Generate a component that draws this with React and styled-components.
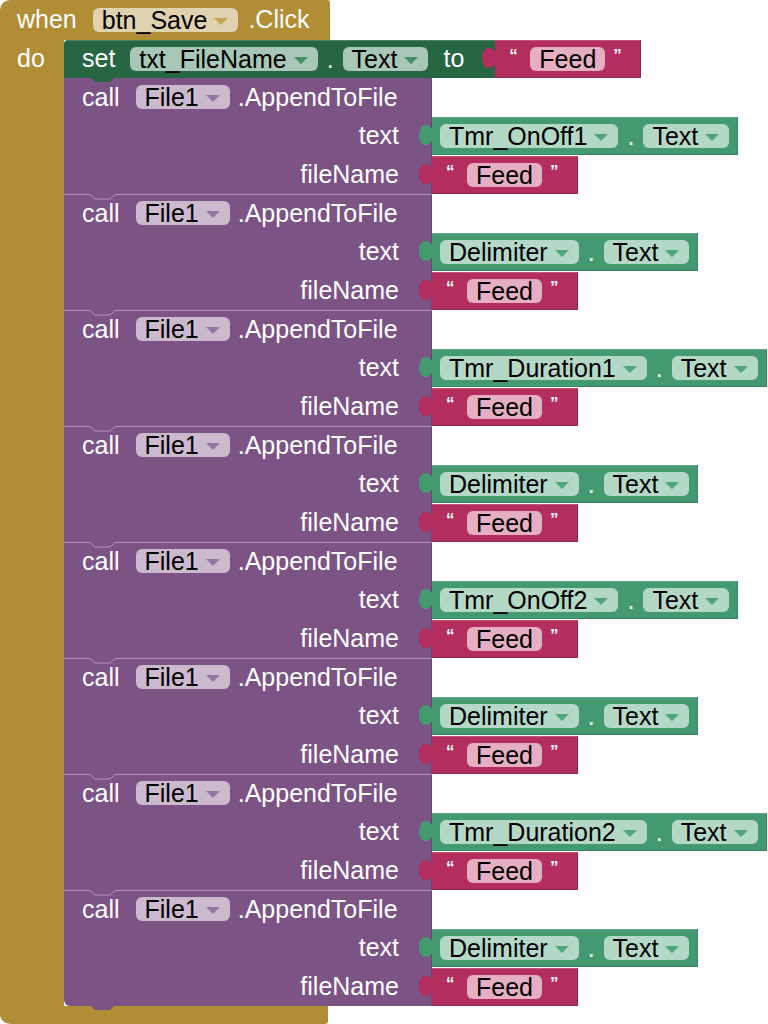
import styled, { createGlobalStyle } from 'styled-components';

const colors = {
  control: '#B18E35',
  method: '#7C5385',
  setter: '#266643',
  getter: '#439970',
  text: '#B32D5E',
};

const fields = {
  control: { bg: '#E0D2AE', arrow: '#C4A552' },
  method: { bg: '#CBBACE', arrow: '#9576A0' },
  setter: { bg: '#A8C7B6', arrow: '#3F8E64' },
  getter: { bg: '#B4D8C6', arrow: '#4FA67C' },
  text: { bg: '#E6AEC2' },
};

const appends = [
  'Tmr_OnOff1',
  'Delimiter',
  'Tmr_Duration1',
  'Delimiter',
  'Tmr_OnOff2',
  'Delimiter',
  'Tmr_Duration2',
  'Delimiter',
];

const GlobalStyle = createGlobalStyle`
  html, body {
    margin: 0;
    padding: 0;
    background: #ffffff;
  }
  body {
    font-family: "Liberation Sans", Arial, sans-serif;
    font-size: 25px;
    overflow: hidden;
  }
`;

const Workspace = styled.div`
  width: 768px;
  height: 1024px;
  overflow: hidden;
`;

const EventBlock = styled.div`
  display: flex;
  flex-direction: column;
  align-items: flex-start;
`;

const EventHeader = styled.div`
  width: 330px;
  height: 40px;
  box-sizing: border-box;
  padding: 0 0 1px 17px;
  display: flex;
  align-items: center;
  background: ${colors.control};
  border-top-left-radius: 10px;
  border-top-right-radius: 3px;
`;

const EventBody = styled.div`
  display: flex;
  align-items: stretch;
`;

const Arm = styled.div`
  width: 64px;
  flex-shrink: 0;
  box-sizing: border-box;
  padding: 4px 0 0 17px;
  background: ${colors.control};
`;

const EventFooter = styled.div`
  width: 328px;
  height: 18px;
  background: ${colors.control};
  border-bottom-left-radius: 10px;
  border-bottom-right-radius: 3px;
`;

const Stack = styled.div`
  display: flex;
  flex-direction: column;
`;

const Label = styled.span`
  color: #ffffff;
  line-height: 25px;
  white-space: nowrap;
  margin-left: ${(p) => p.$ml || 0}px;
`;

const Dot = styled.span`
  color: #ffffff;
  line-height: 24px;
  margin: 0 9px;
`;

const Chip = styled.span`
  display: inline-flex;
  align-items: center;
  height: 24px;
  box-sizing: border-box;
  padding: ${(p) => (p.$plain ? '0 9px' : '0 10px 0 9px')};
  margin-left: ${(p) => p.$ml || 0}px;
  gap: 7px;
  border-radius: 6px;
  background: ${(p) => p.$bg};
  color: #000000;
  line-height: 24px;
  white-space: nowrap;
`;

const Arrow = styled.span`
  width: 0;
  height: 0;
  margin-top: 3px;
  border-left: 7px solid transparent;
  border-right: 7px solid transparent;
  border-top: 7px solid ${(p) => p.$color};
`;

const SetRow = styled.div`
  display: flex;
  align-items: flex-start;
`;

const SetBlock = styled.div`
  position: relative;
  height: 38px;
  box-sizing: border-box;
  padding: 0 31px 1px 18px;
  display: flex;
  align-items: center;
  background: ${colors.setter};
  border-top-left-radius: 4px;
  box-shadow: inset 0 1px 0 rgba(255, 255, 255, 0.18);
`;

const CallBlock = styled.div`
  display: flex;
  align-items: flex-start;
`;

const MethodBody = styled.div`
  position: relative;
  width: 368px;
  flex-shrink: 0;
  box-sizing: border-box;
  display: flex;
  flex-direction: column;
  background: ${colors.method};
  border-bottom-left-radius: ${(p) => (p.$last ? 6 : 0)}px;
  box-shadow: inset -1px 0 0 rgba(0, 0, 0, 0.12);
`;

const MethodHead = styled.div`
  height: 39px;
  box-sizing: border-box;
  padding: 0 0 1px 18px;
  display: flex;
  align-items: center;
`;

const ArgLabel = styled.div`
  height: ${(p) => p.$h}px;
  box-sizing: border-box;
  padding: 0 33px 1px 0;
  display: flex;
  align-items: center;
  justify-content: flex-end;
  color: #ffffff;
  margin-top: ${(p) => p.$mt || 0}px;
`;

const Sockets = styled.div`
  padding-top: 39px;
  display: flex;
  flex-direction: column;
  align-items: flex-start;
`;

const GetterBlock = styled.div`
  position: relative;
  height: 38px;
  box-sizing: border-box;
  padding: 0 9px 0 8px;
  display: flex;
  align-items: center;
  background: ${colors.getter};
  box-shadow: inset -1px -1px 0 rgba(0, 0, 0, 0.14), inset 0 1px 0 rgba(255, 255, 255, 0.18);
`;

const TextBlock = styled.div`
  position: relative;
  height: 38px;
  box-sizing: border-box;
  padding: 0 20px 0 14px;
  margin-top: ${(p) => p.$mt || 0}px;
  display: flex;
  align-items: center;
  background: ${colors.text};
  box-shadow: inset -1px -1px 0 rgba(0, 0, 0, 0.18), inset 0 1px 0 rgba(255, 255, 255, 0.18);
`;

const Quote = styled.span`
  width: 8px;
  color: #ffffff;
  font-size: 17px;
  font-weight: bold;
  line-height: 17px;
  align-self: flex-start;
  margin-top: 7px;
  margin-right: ${(p) => p.$mr || 0}px;
  margin-left: ${(p) => p.$ml || 0}px;
`;

const Tab = styled.svg`
  position: absolute;
  left: -14px;
  top: 6px;
`;

const Notch = styled.svg`
  position: absolute;
  left: 0;
  top: 0;
`;

const NextTab = styled.svg`
  position: absolute;
  left: 26px;
  bottom: -5px;
  z-index: 1;
`;

// puzzle knob on the left edge of an input block
const InputTab = ({ color }) => (
  <Tab width="15" height="24" viewBox="0 0 15 24">
    <path
      d="M15 6 C 13 6, 12 2, 8 2 C 3 2, 1 7, 1 12 C 1 17, 3 22, 8 22 C 12 22, 13 18, 15 18 Z"
      fill={color}
    />
  </Tab>
);

const BottomTab = ({ color }) => (
  <NextTab width="26" height="6" viewBox="0 0 26 6">
    <path d="M0 0 L5 5 L20 5 L25 0 Z" fill={color} />
  </NextTab>
);

const Dropdown = ({ kind, children, ml }) => (
  <Chip $bg={fields[kind].bg} $ml={ml}>
    {children}
    <Arrow $color={fields[kind].arrow} />
  </Chip>
);

const TextLiteral = ({ value, mt }) => (
  <TextBlock $mt={mt}>
    <InputTab color={colors.text} />
    <Quote $mr={13}>“</Quote>
    <Chip $bg={fields.text.bg} $plain>
      {value}
    </Chip>
    <Quote $ml={8}>”</Quote>
  </TextBlock>
);

const ComponentGetter = ({ component }) => (
  <GetterBlock>
    <InputTab color={colors.getter} />
    <Dropdown kind="getter">{component}</Dropdown>
    <Dot>.</Dot>
    <Dropdown kind="getter">Text</Dropdown>
  </GetterBlock>
);

const AppendCall = ({ component, first, last }) => (
  <CallBlock>
    <MethodBody $last={last}>
      {!first && (
        <Notch width="368" height="6" viewBox="0 0 368 6">
          <polyline
            points="0,0.5 26,0.5 31,5 46,5 51,0.5 368,0.5"
            fill="none"
            stroke="rgba(255,255,255,0.38)"
            strokeWidth="1"
          />
        </Notch>
      )}
      <MethodHead>
        <Label>call</Label>
        <Dropdown kind="method" ml={16}>
          File1
        </Dropdown>
        <Label $ml={8}>.AppendToFile</Label>
      </MethodHead>
      <ArgLabel $h={38}>text</ArgLabel>
      <ArgLabel $h={38} $mt={1}>
        fileName
      </ArgLabel>
      <BottomTab color={colors.method} />
    </MethodBody>
    <Sockets>
      <ComponentGetter component={component} />
      <TextLiteral value="Feed" mt={1} />
    </Sockets>
  </CallBlock>
);

const App = () => (
  <Workspace>
    <GlobalStyle />
    <EventBlock>
      <EventHeader>
        <Label>when</Label>
        <Dropdown kind="control" ml={16}>
          btn_Save
        </Dropdown>
        <Label $ml={10}>.Click</Label>
      </EventHeader>
      <EventBody>
        <Arm>
          <Label>do</Label>
        </Arm>
        <Stack>
          <SetRow>
            <SetBlock>
              <Label>set</Label>
              <Dropdown kind="setter" ml={15}>
                txt_FileName
              </Dropdown>
              <Dot>.</Dot>
              <Dropdown kind="setter">Text</Dropdown>
              <Label $ml={15}>to</Label>
              <BottomTab color={colors.setter} />
            </SetBlock>
            <TextLiteral value="Feed" />
          </SetRow>
          {appends.map((name, i) => (
            <AppendCall
              key={i}
              component={name}
              first={i === 0}
              last={i === appends.length - 1}
            />
          ))}
        </Stack>
      </EventBody>
      <EventFooter />
    </EventBlock>
  </Workspace>
);

export default App;
